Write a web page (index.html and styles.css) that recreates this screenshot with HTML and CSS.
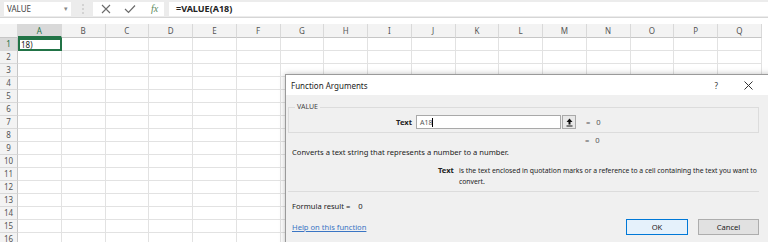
FILE: index.html
```html
<!DOCTYPE html>
<html lang="en">
<head>
  <meta charset="UTF-8">
  <title>Function Arguments</title>
  <link rel="stylesheet" href="styles.css">
</head>
<body>

  <div class="toolbar">
    <div class="namebox">
      <span>VALUE</span>
      <span class="drop">&#9662;</span>
    </div>
    <svg class="grip" width="4" height="12" viewBox="0 0 4 12">
      <circle cx="2" cy="2" r="0.8" fill="#b5b5b5"/>
      <circle cx="2" cy="6" r="0.8" fill="#b5b5b5"/>
      <circle cx="2" cy="10" r="0.8" fill="#b5b5b5"/>
    </svg>
    <div class="fxbox">
      <svg width="10" height="10" viewBox="0 0 10 10">
        <path d="M1 1 L9 9 M9 1 L1 9" stroke="#6b6b6b" stroke-width="1.1" fill="none"/>
      </svg>
      <svg width="12" height="10" viewBox="0 0 12 10">
        <path d="M1 5 L4.5 8.5 L11 1.5" stroke="#6b6b6b" stroke-width="1.2" fill="none"/>
      </svg>
      <span class="fx">fx</span>
    </div>
    <div class="formula">=VALUE(A18)</div>
  </div>

  <div class="sheet" id="sheet"></div>

  <div class="dialog">
    <div class="titlebar">
      <span class="title">Function Arguments</span>
      <span class="help">?</span>
      <svg class="close" width="9" height="9" viewBox="0 0 9 9">
        <path d="M0.5 0.5 L8.5 8.5 M8.5 0.5 L0.5 8.5" stroke="#333" stroke-width="1" fill="none"/>
      </svg>
    </div>
    <div class="body">
      <fieldset class="group">
        <legend>VALUE</legend>
        <div class="argrow">
          <span class="argname">Text</span>
          <div class="input">A18<span class="caret"></span></div>
          <div class="refbtn">
            <svg width="7" height="9" viewBox="0 0 7 9">
              <path d="M3.5 0.5 L6.5 4 L4.5 4 L4.5 6.5 L2.5 6.5 L2.5 4 L0.5 4 Z" fill="#111"/>
              <rect x="0.5" y="7.5" width="6" height="1" fill="#111"/>
            </svg>
          </div>
          <span class="eq">=&nbsp;&nbsp;&nbsp;0</span>
        </div>
      </fieldset>
      <div class="total"><span class="eq">=&nbsp;&nbsp;&nbsp;0</span></div>
      <p class="desc">Converts a text string that represents a number to a number.</p>
      <div class="argdesc">
        <b>Text</b>
        <span>is the text enclosed in quotation marks or a reference to a cell containing the text you want to convert.</span>
      </div>
      <div class="rule"></div>
      <p class="result">Formula result =&nbsp;&nbsp;&nbsp;&nbsp;0</p>
      <div class="footer">
        <a href="#">Help on this function</a>
        <div class="buttons">
          <button class="ok">OK</button>
          <button class="cancel">Cancel</button>
        </div>
      </div>
    </div>
  </div>

  <script>
    const sheet = document.getElementById('sheet');
    const cols = 'ABCDEFGHIJKLMNOPQ'.split('');

    function cell(cls, text) {
      const d = document.createElement('div');
      d.className = cls;
      d.textContent = text || '';
      sheet.appendChild(d);
    }

    cell('corner');
    cols.forEach(c => cell(c === 'A' ? 'colhead active' : 'colhead', c));
    for (let r = 1; r <= 16; r++) {
      cell(r === 1 ? 'rowhead active' : 'rowhead', r);
      cols.forEach(c => {
        if (r === 1 && c === 'A') cell('cell selected', '18)');
        else cell('cell');
      });
    }
  </script>

</body>
</html>
```

FILE: styles.css
```css
body {
  margin: 0;
  width: 768px;
  height: 242px;
  overflow: hidden;
  position: relative;
  background-color: #fff;
  font-family: "Noto Sans", "Open Sans", sans-serif;
  color: #222;
}

/* formula bar */
.toolbar {
  display: flex;
  align-items: center;
  height: 18px;
  background-color: #ececec;
  border-bottom: 1px solid #d6d6d6;
  box-sizing: border-box;
}
.namebox {
  display: flex;
  align-items: center;
  justify-content: space-between;
  margin-left: 4px;
  width: 67px;
  height: 14px;
  padding: 0 3px;
  box-sizing: border-box;
  background-color: #fff;
  font-size: 8px;
  color: #444;
}
.drop {
  font-size: 7px;
  color: #888;
}
.grip {
  margin-left: 10px;
}
.fxbox {
  display: flex;
  align-items: center;
  gap: 13px;
  margin-left: 8px;
  width: 71px;
  height: 14px;
  padding-left: 8px;
  box-sizing: border-box;
  background-color: #fff;
}
.fx {
  margin-left: 2px;
  font-family: "Liberation Serif", serif;
  font-style: italic;
  font-size: 10px;
  color: #5c8a5c;
}
.formula {
  flex: 1;
  margin-left: 5px;
  height: 14px;
  line-height: 14px;
  padding-left: 7px;
  background-color: #fff;
  font-size: 9px;
  font-weight: bold;
  color: #222;
}

/* grid */
.sheet {
  display: grid;
  grid-template-columns: 18px repeat(17, 43.75px);
  grid-template-rows: 14px;
  grid-auto-rows: 13px;
  margin-top: 6px;
  font-size: 8px;
}
.sheet > div {
  box-sizing: border-box;
  border-right: 1px solid #e2e2e2;
  border-bottom: 1px solid #e2e2e2;
}
.corner, .colhead, .rowhead {
  background-color: #f3f3f3;
  color: #555;
  text-align: center;
}
.sheet > .colhead, .sheet > .corner {
  border-right-color: #d9d9d9;
  border-bottom-color: #c6c6c6;
  line-height: 13px;
}
.sheet > .rowhead {
  border-right-color: #c6c6c6;
  border-bottom-color: #d9d9d9;
  line-height: 12px;
}
.sheet > .active {
  background-color: #d9d9d9;
  color: #217346;
}
.sheet > .colhead.active {
  border-bottom: 2px solid #217346;
}
.sheet > .selected {
  border: 2px solid #217346;
  padding-left: 1px;
  line-height: 9px;
  color: #222;
}

/* dialog window */
.dialog {
  position: absolute;
  left: 285px;
  top: 74px;
  width: 490px;
  height: 175px;
  box-sizing: border-box;
  border: 1px solid #9a9a9a;
  background-color: #f0f0f0;
  box-shadow: 0 0 6px rgba(0, 0, 0, 0.25);
  font-size: 7.6px;
  color: #222;
}
.titlebar {
  display: flex;
  align-items: center;
  height: 20px;
  padding-left: 5px;
  background-color: #fff;
  font-size: 8px;
}
.title {
  flex: 1;
}
.help {
  margin-right: 26px;
  color: #333;
}
.close {
  margin-right: 21px;
}
.body {
  padding: 8px 15px 0 2px;
}
.group {
  margin: 0;
  padding: 0 0 3px 0;
  height: 30px;
  box-sizing: border-box;
  border: 1px solid #dcdcdc;
}
.group legend {
  margin-left: 6px;
  padding: 0 2px;
  font-size: 7px;
  color: #444;
  line-height: 8px;
}
.argrow {
  display: flex;
  align-items: center;
  height: 18px;
  margin-top: 2px;
}
.argname {
  width: 123px;
  text-align: right;
  font-weight: bold;
  margin-right: 4px;
}
.input {
  display: flex;
  align-items: center;
  width: 145px;
  height: 14px;
  box-sizing: border-box;
  padding-left: 3px;
  background-color: #fff;
  border: 1px solid #a9a9a9;
  font-size: 7px;
  color: #555;
}
.caret {
  width: 1px;
  height: 9px;
  background-color: #000;
}
.refbtn {
  display: flex;
  align-items: center;
  justify-content: center;
  width: 14px;
  height: 14px;
  box-sizing: border-box;
  margin-left: 1px;
  background-color: #e8e8e8;
  border: 1px solid #a9a9a9;
}
.eq {
  margin-left: 10px;
  color: #555;
}
.total {
  height: 13px;
  line-height: 15px;
  padding-left: 287px;
}
.desc {
  margin: 0;
  padding-left: 4px;
  height: 13px;
  line-height: 13px;
}
.argdesc {
  display: flex;
  gap: 5px;
  padding-left: 150px;
  margin-top: 6px;
  line-height: 11px;
}
.argdesc span {
  width: 304px;
  font-size: 6.8px;
}
.rule {
  margin-top: 4px;
  height: 1px;
  background-color: #dcdcdc;
}
.result {
  margin: 0;
  padding-left: 4px;
  height: 27px;
  line-height: 28px;
}
.footer {
  display: flex;
  align-items: center;
  justify-content: space-between;
  padding-left: 4px;
}
.footer a {
  color: #3a75c4;
}
.buttons {
  display: flex;
  gap: 10px;
}
button {
  width: 62px;
  height: 16px;
  font-family: inherit;
  font-size: 7.6px;
  color: #222;
  background-color: #e1e1e1;
  border: 1px solid #adadad;
  padding: 0;
}
.ok {
  background-color: #e5f1fb;
  border-color: #0078d7;
}
.cancel {
  width: 61px;
}
```
